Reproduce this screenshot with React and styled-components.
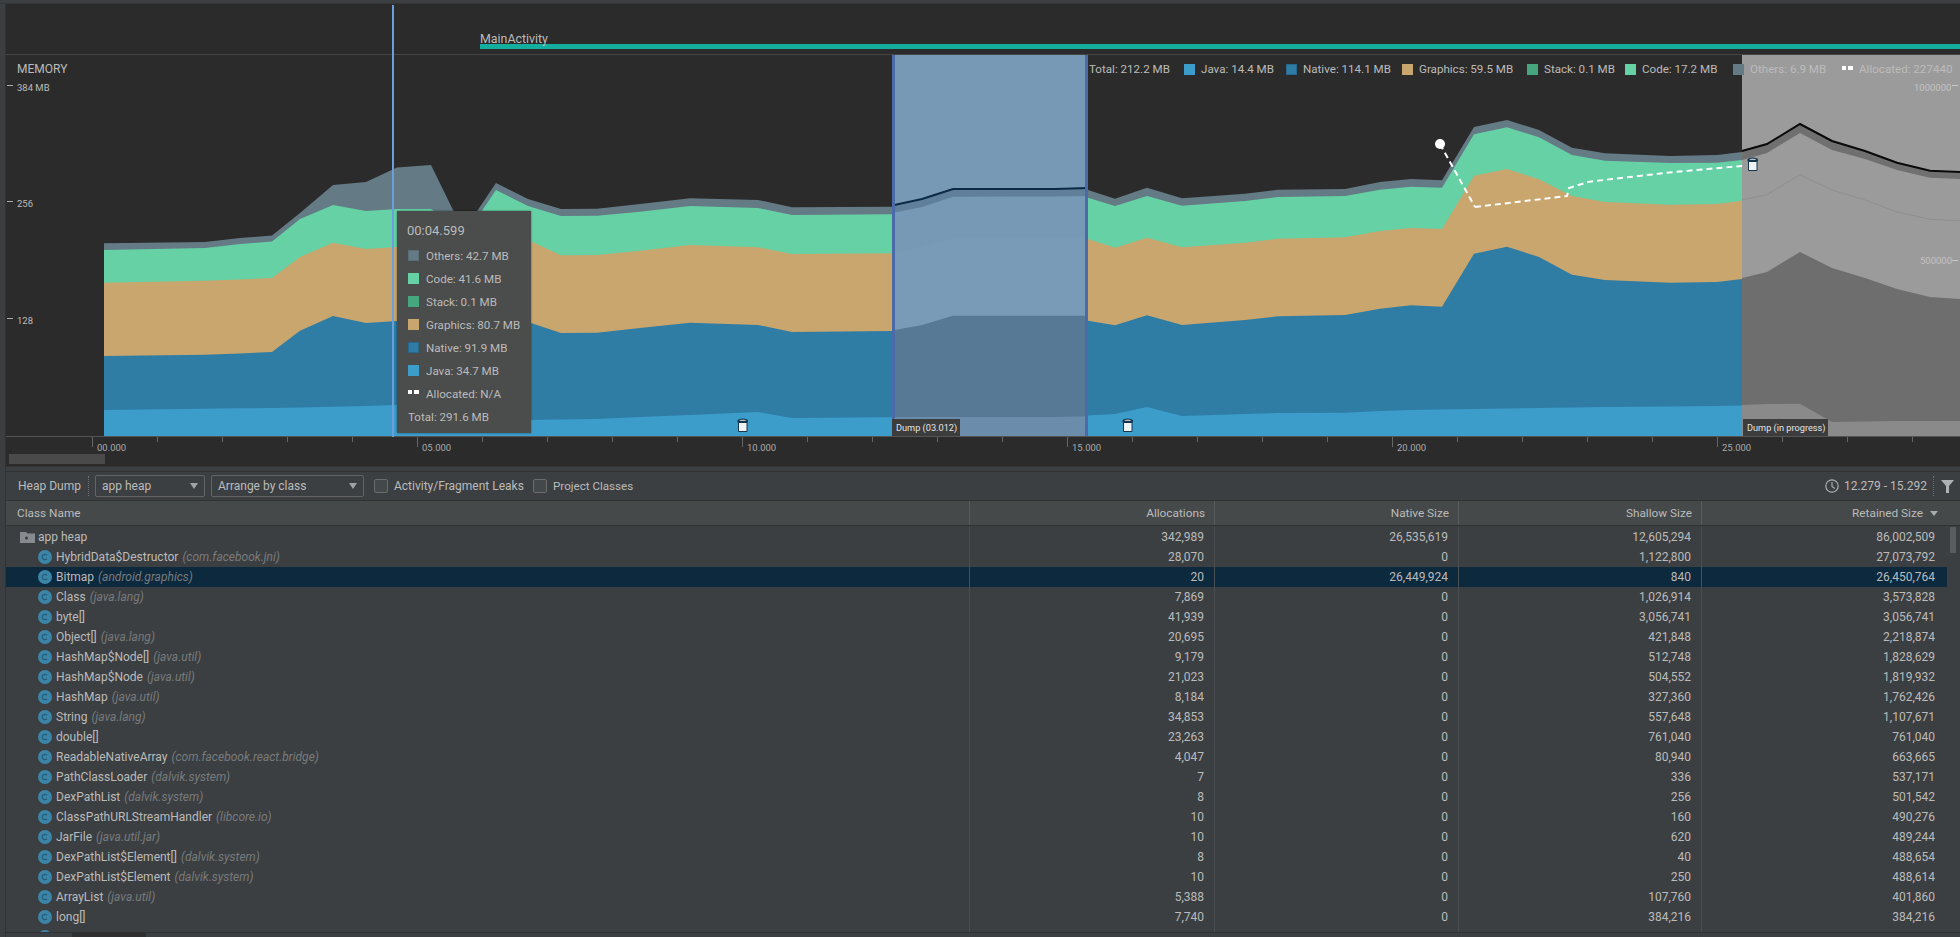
import React from "react";
import styled, { createGlobalStyle } from "styled-components";

const Global = createGlobalStyle`
  html, body { margin: 0; padding: 0; background: #3c3f41; }
  #root { width: 1960px; height: 937px; overflow: hidden; }
  * { box-sizing: border-box; }
`;

const FONT = `Roboto, "Open Sans", "Liberation Sans", sans-serif`;

const Page = styled.div`
  width: 1960px; height: 937px; display: flex; flex-direction: column;
  background: #3c3f41; color: #bbbbbb; font: 12px/16px ${FONT}; overflow: hidden;
`;
const TopStrip = styled.div`height: 4px; flex: none; background: #3c3f41; border-bottom: 1px solid #333537;`;
const Main = styled.div`flex: 1; min-height: 0; margin-left: 5px; border-left: 1px solid #303234; display: flex; flex-direction: column; position: relative;`;
const SessionBar = styled.div`height: 51px; flex: none; background: #2b2b2b; border-bottom: 1px solid #454545; position: relative; padding: 29px 0 0 474px;`;
const ActivityName = styled.div`font-size: 12.4px; line-height: 12px; color: #bbbbbb; height: 11px; white-space: nowrap;`;
const ActivityTrack = styled.div`height: 5px; background: #14ae9f;`;
const Playhead = styled.div`position: absolute; left: 386px; top: 1px; height: 432px; width: 2px; background: #6a9fdc; z-index: 3;`;
const MemoryCanvas = styled.div`height: 381px; flex: none; position: relative; background: #2b2b2b; overflow: hidden;`;
const ChartSvg = styled.svg`position: absolute; inset: 0; display: block;`;
const PanelTitle = styled.div`position: absolute; left: 11px; top: 6px; font-size: 12px; color: #bbbbbb;`;
const YLabel = styled.div`position: absolute; left: ${p => p.$x}px; top: ${p => p.$y}px; font-size: 9.5px; line-height: 12px; color: ${p => p.$c || "#bbbbbb"}; white-space: nowrap;`;
const Legend = styled.div`position: absolute; left: 1083px; top: 6px; height: 16px; width: 860px;`;
const LegendItem = styled.div`position: absolute; left: ${p => p.$x}px; top: 0; display: flex; align-items: center; font-size: 11.6px; color: #bbbbbb; white-space: nowrap;`;
const Swatch = styled.span`width: 11px; height: 11px; background: ${p => p.$c}; margin-right: ${p => p.$m || 6}px; flex: none; border: 1px solid ${p => p.$b || "transparent"};`;
const Dash = styled.span`width: 11px; height: 4px; flex: none; margin-right: 6px; margin-top: -2px; background: linear-gradient(90deg, #fff 0 4.5px, transparent 4.5px 6.5px, #fff 6.5px);`;
const DumpTag = styled.div`position: absolute; left: ${p => p.$x}px; bottom: 0; height: 17px; padding: 0 3px 0 4px; background: #3c3c3c; color: #e4e4e4; font-size: 9.2px; line-height: 17px; white-space: nowrap;`;
const Tooltip = styled.div`
  position: absolute; left: 391px; top: 156px; width: 134px; height: 222px; background: #4b4c4c;
  box-shadow: 0 0 2px rgba(0,0,0,.45); padding: 12px 0 0 10px; color: #bbbbbb; font-size: 11.6px; z-index: 4;
`;
const TipTime = styled.div`height: 20px; line-height: 16px; font-size: 13px; margin-bottom: 1px;`;
const TipRow = styled.div`height: 23px; display: flex; align-items: center; white-space: nowrap; padding-left: 1px;`;
const TipSwatch = styled(Swatch)`margin-right: 7px;`;
const TipDash = styled(Dash)`margin-right: 7px; margin-top: -3px;`;
const AxisBar = styled.div`height: 30px; flex: none; background: #2b2b2b; border-top: 1px solid #555555; position: relative;`;
const AxisSvg = styled.svg`position: absolute; left: 0; top: 0; display: block;`;
const AxisLabel = styled.div`position: absolute; left: ${p => p.$x}px; top: 4px; font-size: 9.5px; line-height: 14px; color: #aaaaaa;`;
const ScrollThumb = styled.div`position: absolute; left: 3px; top: 17px; width: 96px; height: 10px; background: #4a4a4a;`;
const Band = styled.div`height: 5px; flex: none; background: #3c3f41; border-top: 1px solid #333;`;
const Toolbar = styled.div`height: 30px; flex: none; display: flex; align-items: center; padding-left: 12px; border-top: 1px solid #2f3133; border-bottom: 1px solid #2f3133; font-size: 12px;`;
const ToolLabel = styled.span`width: 64px; white-space: nowrap;`;
const DotSep = styled.span`width: 0; height: 20px; border-left: 1px dotted #6d6d6d; margin: 0 ${p => p.$r ?? 6}px 0 ${p => p.$l ?? 6}px;`;
const Select = styled.div`width: ${p => p.$w}px; margin-right: ${p => p.$r}px; height: 22px; border: 1px solid #646464; border-radius: 2px; padding-left: 6px; display: flex; align-items: center; justify-content: space-between; padding-right: 6px; white-space: nowrap;`;
const Caret = styled.span`width: 0; height: 0; border-left: 4.5px solid transparent; border-right: 4.5px solid transparent; border-top: 6px solid #a0a4a6;`;
const CheckBox = styled.span`width: 14px; height: 14px; border: 1px solid #6b6b6b; border-radius: 2px; background: #43494a; margin-right: 6px; flex: none;`;
const CheckLabel = styled.span`width: ${p => p.$w}px; white-space: nowrap; font-size: ${p => p.$f || 12}px;`;
const ToolRight = styled.div`margin-left: auto; display: flex; align-items: center; height: 100%; padding-right: 6px;`;
const RangeText = styled.span`margin: 0 6px 0 5px; white-space: nowrap;`;
const Table = styled.div`flex: 1; min-height: 0; display: flex; flex-direction: column;`;
const HeaderRow = styled.div`height: 25px; flex: none; display: grid; grid-template-columns: 964px 245px 244px 243px 258px; background: #45494a; border-bottom: 1px solid #323232;`;
const HeadCell = styled.div`display: flex; align-items: center; justify-content: ${p => p.$first ? "flex-start" : "flex-end"}; padding: ${p => p.$first ? "0 0 0 11px" : `0 ${p.$pr ?? 9}px 0 0`}; border-right: ${p => p.$nob ? "none" : "1px solid #585b5d"}; white-space: nowrap; font-size: 11.8px;`;
const SortArrow = styled.span`width: 0; height: 0; margin-left: 7px; border-left: 4.5px solid transparent; border-right: 4.5px solid transparent; border-top: 5px solid #a8acae;`;
const BodyWrap = styled.div`flex: 1; min-height: 0; display: flex; overflow: hidden;`;
const Rows = styled.div`width: 1941px; flex: none; overflow: hidden; padding-top: 1px;`;
const VScroll = styled.div`flex: 1; position: relative; background: #3c3f41;`;
const VThumb = styled.div`position: absolute; left: 3px; top: 1px; width: 6px; height: 26px; background: #5a5d5f;`;
const Row = styled.div`height: 20px; display: grid; grid-template-columns: 964px 245px 244px 243px 245px; background: ${p => p.$sel ? "#0d293e" : "transparent"};`;
const NameCell = styled.div`display: flex; align-items: center; padding-left: ${p => p.$i}px; white-space: nowrap; border-right: 1px solid #4b4e50;`;
const NumCell = styled.div`display: flex; align-items: center; justify-content: flex-end; padding-right: ${p => p.$pr ?? 10}px; border-right: ${p => p.$nob ? "none" : "1px solid #4b4e50"};`;
const Pkg = styled.span`font-style: italic; color: #787b7d; margin-left: 4px;`;
const IconWrap = styled.svg`flex: none; display: block; margin-right: ${p => p.$m ?? 4}px;`;
const HScroll = styled.div`height: 5px; flex: none; position: relative; background: #3c3f41; border-top: 1px solid #2f3133;`;
const HThumb = styled.div`position: absolute; left: 66px; top: 0; width: 74px; height: 4px; background: #2e3032;`;

const pts = (xs, top) => xs.map((x, i) => `${x},${top[i]}`).join(" ");
const closed = (xs, top) => `${pts(xs, top)} ${xs[xs.length - 1]},436 ${xs[0]},436`;

const A = {
  xs: [104,205,240,272,300,333,366,397,431,453,465,496,528,561,597,640,690,758,792,892],
  others: [243.3,242,238,235.5,213,185,182,167.5,165,210,229,183,199,209,208.7,204,198.3,200,207.3,206.7],
  code: [250,248,244,241.5,219,205,211,209,209,225,236,190,206,216,215.7,211.7,206,208,215,214.3],
  graphics: [282.7,280.7,279.5,278,257,242.7,249,247,247,260,270,225,240,255.3,255,250.7,245,247.3,254,253.3],
  native: [356,354.7,353.5,352,330.7,316,323,321,321,335,345,305,322,333,332.7,328,322.7,325,332,331],
  java: [410,408.7,408.3,408,407.5,406.7,406,405,405,420,424,422,420,419.5,419,417,415,412,418,417.3],
};
const B = {
  xs: [1088,1115,1147,1182,1245,1278,1345,1380,1411,1442,1474,1507,1539,1572,1605,1670,1717,1742],
  others: [190,198.7,187.7,198.3,193.7,189.7,189,182,179,180.3,127,120,130,147.7,153.3,156,155,152],
  code: [197.7,206,196,205.7,201,197,196,189.7,186.7,187.7,134.3,127.3,137.3,155,160.7,163,162.7,160],
  graphics: [239,247.7,237.7,247.3,242.7,238.7,237.3,231,228,229,175.7,169,179.3,196,202,204.7,204,200.7],
  native: [320.7,325.3,315.3,325,320,316.3,315,308.7,305.3,306.7,253.7,246.7,257,274.7,280,282.7,282,279],
  java: [415.5,414,407,416,414,413,412.7,411,410,409.5,409,408.5,408,407.5,407,406.5,406,405.5],
};
const C = {
  xs: [892,922,953,1055,1088],
  others: [205.5,199,189,189,188],
  code: [213,207,196.7,196.5,196],
  graphics: [252.8,247,237.7,237.5,237.3],
  native: [330.5,325,315.7,315.7,315.7],
  java: [417.3,417,417,417,416.3],
};
const D = {
  xs: [1742,1767,1800,1832,1865,1897,1930,1960],
  others: [151,144,124,141,151,162.7,170.7,172],
  code: [160,153,133,150,159,170,177.7,179],
  graphics: [200,194.7,174.7,190,200,212,219.3,220.7],
  native: [278,272,252,268,278,289,297,299],
  java: [405,404,403.7,422,421.5,421,421,421],
};
const COL = { others: "#647a85", code: "#65d1a5", graphics: "#c9a66d", native: "#2f7ca5", java: "#3c9dcb", stack: "#46a67e" };

function Trash({ x, y }) {
  return (
    <g transform={`translate(${x} ${y})`}>
      <path d="M1.500 4.500h8.500v9H1.500z" fill="#eef3f6" stroke="#14354c" strokeWidth="1" />
      <path d="M.5 4.500V2.500C.5 1.500 3 .5 5.750.5S11 1.500 11 2.500V4.500z" fill="#14354c" />
      <path d="M2 2.800C2.500 2.100 4 1.700 5.750 1.700S9 2.100 9.500 2.800z" fill="#eef3f6" />
    </g>
  );
}

function Bands({ s, colors }) {
  return (
    <>
      {["others", "code", "graphics", "native", "java"].map(k => (
        <polygon key={k} points={closed(s.xs, s[k])} fill={colors[k]} />
      ))}
    </>
  );
}

function Chart() {
  return (
    <ChartSvg width="1954" height="381" viewBox="6 55 1954 381">
      <Bands s={A} colors={COL} />
      <Bands s={B} colors={COL} />
      <rect x="892" y="55" width="196" height="381" fill="#7899b5" />
      <Bands s={C} colors={{ others: "#5f7f9b", code: "#7899b5", graphics: "#7a9bb7", native: "#587995", java: "#6b8dab" }} />
      <polyline points={pts(C.xs, C.others)} fill="none" stroke="#0b2a45" strokeWidth="2" />
      <rect x="892" y="55" width="3" height="381" fill="#4a6ba8" />
      <rect x="1085" y="55" width="3" height="381" fill="#4a6ba8" />
      <rect x="1742" y="55" width="218" height="381" fill="#9b9b9b" />
      <Bands s={D} colors={{ others: "#707070", code: "#9b9b9b", graphics: "#9b9b9b", native: "#6e6e6e", java: "#8a8a8a" }} />
      <polyline points={pts(D.xs, D.graphics)} fill="none" stroke="#8f8f8f" strokeWidth="1" />
      <polyline points={pts(D.xs, D.others)} fill="none" stroke="#0a0a0a" strokeWidth="2" />
      <polyline points="1440,144 1475,207" fill="none" stroke="#fff" strokeWidth="2" strokeDasharray="6 4" />
      <polyline points="1475,207 1567,196 1569,188 1588,182 1612,179 1674,172 1742,166" fill="none" stroke="#fff" strokeWidth="2" strokeDasharray="6 4" />
      <circle cx="1440" cy="144" r="5" fill="#fff" />
      <Trash x="737" y="418" />
      <Trash x="1122" y="418" />
      <Trash x="1747" y="157" />
      <g stroke="#aaaaaa" strokeWidth="1">
        <path d="M7 85.500h6M7 201.500h6M7 318.500h6" />
        <path d="M1952 85.500h6M1952 260.500h6" stroke="#c8c8c8" />
      </g>
    </ChartSvg>
  );
}

const ticks = Array.from({ length: 29 }, (_, i) => 86.5 + 65 * i);

function Axis() {
  return (
    <AxisBar>
      <AxisSvg width="1954" height="14">
        {ticks.map((x, i) => (
          <line key={x} x1={x} x2={x} y1="0" y2={i % 5 === 0 ? 10 : 5} stroke="#666666" strokeWidth="1" />
        ))}
      </AxisSvg>
      {["00.000", "05.000", "10.000", "15.000", "20.000", "25.000"].map((t, i) => (
        <AxisLabel key={t} $x={91 + 325 * i}>{t}</AxisLabel>
      ))}
      <ScrollThumb />
    </AxisBar>
  );
}

const ClassIcon = () => (
  <IconWrap width="14" height="14" viewBox="0 0 14 14">
    <circle cx="7" cy="7" r="7" fill="#3a85a8" />
    <path d="M9 5.200A2.700 2.700 0 1 0 9 8.800" fill="none" stroke="#2a5f7c" strokeWidth="1.300" />
  </IconWrap>
);
const FolderIcon = () => (
  <IconWrap width="15" height="11" viewBox="0 0 15 11" $m={3}>
    <path d="M0 0h6l1.500 1.500H15V11H0z" fill="#858b8f" />
    <circle cx="6.500" cy="6" r="1.500" fill="#3c3f41" />
  </IconWrap>
);
const ClockIcon = () => (
  <svg width="14" height="14" viewBox="0 0 14 14" fill="none" stroke="#a9adb0" strokeWidth="1.200">
    <circle cx="7" cy="7" r="6.200" />
    <path d="M7 3V7.500L9.800 9.500" />
  </svg>
);
const FilterIcon = () => (
  <svg width="13" height="13" viewBox="0 0 13 13">
    <path d="M0 0h13L8 6v7H5V6z" fill="#aeb2b5" />
  </svg>
);

const data = [
  ["HybridData$Destructor", "com.facebook.jni", "28,070", "0", "1,122,800", "27,073,792"],
  ["Bitmap", "android.graphics", "20", "26,449,924", "840", "26,450,764"],
  ["Class", "java.lang", "7,869", "0", "1,026,914", "3,573,828"],
  ["byte[]", "", "41,939", "0", "3,056,741", "3,056,741"],
  ["Object[]", "java.lang", "20,695", "0", "421,848", "2,218,874"],
  ["HashMap$Node[]", "java.util", "9,179", "0", "512,748", "1,828,629"],
  ["HashMap$Node", "java.util", "21,023", "0", "504,552", "1,819,932"],
  ["HashMap", "java.util", "8,184", "0", "327,360", "1,762,426"],
  ["String", "java.lang", "34,853", "0", "557,648", "1,107,671"],
  ["double[]", "", "23,263", "0", "761,040", "761,040"],
  ["ReadableNativeArray", "com.facebook.react.bridge", "4,047", "0", "80,940", "663,665"],
  ["PathClassLoader", "dalvik.system", "7", "0", "336", "537,171"],
  ["DexPathList", "dalvik.system", "8", "0", "256", "501,542"],
  ["ClassPathURLStreamHandler", "libcore.io", "10", "0", "160", "490,276"],
  ["JarFile", "java.util.jar", "10", "0", "620", "489,244"],
  ["DexPathList$Element[]", "dalvik.system", "8", "0", "40", "488,654"],
  ["DexPathList$Element", "dalvik.system", "10", "0", "250", "488,614"],
  ["ArrayList", "java.util", "5,388", "0", "107,760", "401,860"],
  ["long[]", "", "7,740", "0", "384,216", "384,216"],
];

function Numbers({ v }) {
  return (
    <>
      <NumCell>{v[0]}</NumCell>
      <NumCell>{v[1]}</NumCell>
      <NumCell>{v[2]}</NumCell>
      <NumCell $nob $pr={12}>{v[3]}</NumCell>
    </>
  );
}

export default function App() {
  return (
    <Page>
      <Global />
      <TopStrip />
      <Main>
        <Playhead />
        <SessionBar>
          <ActivityName>MainActivity</ActivityName>
          <ActivityTrack />
        </SessionBar>
        <MemoryCanvas>
          <Chart />
          <PanelTitle>MEMORY</PanelTitle>
          <YLabel $x={11} $y={27}>384 MB</YLabel>
          <YLabel $x={11} $y={143}>256</YLabel>
          <YLabel $x={11} $y={260}>128</YLabel>
          <YLabel $x={1908} $y={27} $c="#c2c2c2">1000000</YLabel>
          <YLabel $x={1914} $y={200} $c="#c2c2c2">500000</YLabel>
          <Legend>
            <LegendItem $x={0}>Total: 212.2 MB</LegendItem>
            <LegendItem $x={95}><Swatch $c={COL.java} />Java: 14.4 MB</LegendItem>
            <LegendItem $x={197}><Swatch $c={COL.native} $b="#27688c" />Native: 114.1 MB</LegendItem>
            <LegendItem $x={313}><Swatch $c={COL.graphics} />Graphics: 59.5 MB</LegendItem>
            <LegendItem $x={438}><Swatch $c={COL.stack} />Stack: 0.1 MB</LegendItem>
            <LegendItem $x={536}><Swatch $c={COL.code} />Code: 17.2 MB</LegendItem>
            <LegendItem $x={644}><Swatch $c={COL.others} />Others: 6.9 MB</LegendItem>
            <LegendItem $x={753}><Dash />Allocated: 227440</LegendItem>
          </Legend>
          <DumpTag $x={886}>Dump (03.012)</DumpTag>
          <DumpTag $x={1737}>Dump (in progress)</DumpTag>
          <Tooltip>
            <TipTime>00:04.599</TipTime>
            <TipRow><TipSwatch $c={COL.others} $b="#5a6e78" />Others: 42.7 MB</TipRow>
            <TipRow><TipSwatch $c={COL.code} />Code: 41.6 MB</TipRow>
            <TipRow><TipSwatch $c={COL.stack} />Stack: 0.1 MB</TipRow>
            <TipRow><TipSwatch $c={COL.graphics} />Graphics: 80.7 MB</TipRow>
            <TipRow><TipSwatch $c={COL.native} $b="#27688c" />Native: 91.9 MB</TipRow>
            <TipRow><TipSwatch $c={COL.java} />Java: 34.7 MB</TipRow>
            <TipRow><TipDash />Allocated: N/A</TipRow>
            <TipRow>Total: 291.6 MB</TipRow>
          </Tooltip>
        </MemoryCanvas>
        <Axis />
        <Band />
        <Toolbar>
          <ToolLabel>Heap Dump</ToolLabel>
          <DotSep />
          <Select $w={110} $r={6}>app heap<Caret /></Select>
          <Select $w={153} $r={10}>Arrange by class<Caret /></Select>
          <CheckBox /><CheckLabel $w={139}>Activity/Fragment Leaks</CheckLabel>
          <CheckBox /><CheckLabel $w={90} $f={11.6}>Project Classes</CheckLabel>
          <ToolRight>
            <ClockIcon />
            <RangeText>12.279 - 15.292</RangeText>
            <DotSep $l={0} $r={7} />
            <FilterIcon />
          </ToolRight>
        </Toolbar>
        <Table>
          <HeaderRow>
            <HeadCell $first>Class Name</HeadCell>
            <HeadCell>Allocations</HeadCell>
            <HeadCell>Native Size</HeadCell>
            <HeadCell>Shallow Size</HeadCell>
            <HeadCell $nob $pr={22}>Retained Size<SortArrow /></HeadCell>
          </HeaderRow>
          <BodyWrap>
            <Rows>
              <Row>
                <NameCell $i={14}><FolderIcon />app heap</NameCell>
                <Numbers v={["342,989", "26,535,619", "12,605,294", "86,002,509"]} />
              </Row>
              {data.map(d => (
                <Row key={d[0]} $sel={d[0] === "Bitmap"}>
                  <NameCell $i={32}><ClassIcon />{d[0]}{d[1] && <Pkg>({d[1]})</Pkg>}</NameCell>
                  <Numbers v={d.slice(2)} />
                </Row>
              ))}
              <Row>
                <NameCell $i={32}><ClassIcon /></NameCell>
                <Numbers v={["", "", "", ""]} />
              </Row>
            </Rows>
            <VScroll><VThumb /></VScroll>
          </BodyWrap>
          <HScroll><HThumb /></HScroll>
        </Table>
      </Main>
    </Page>
  );
}
